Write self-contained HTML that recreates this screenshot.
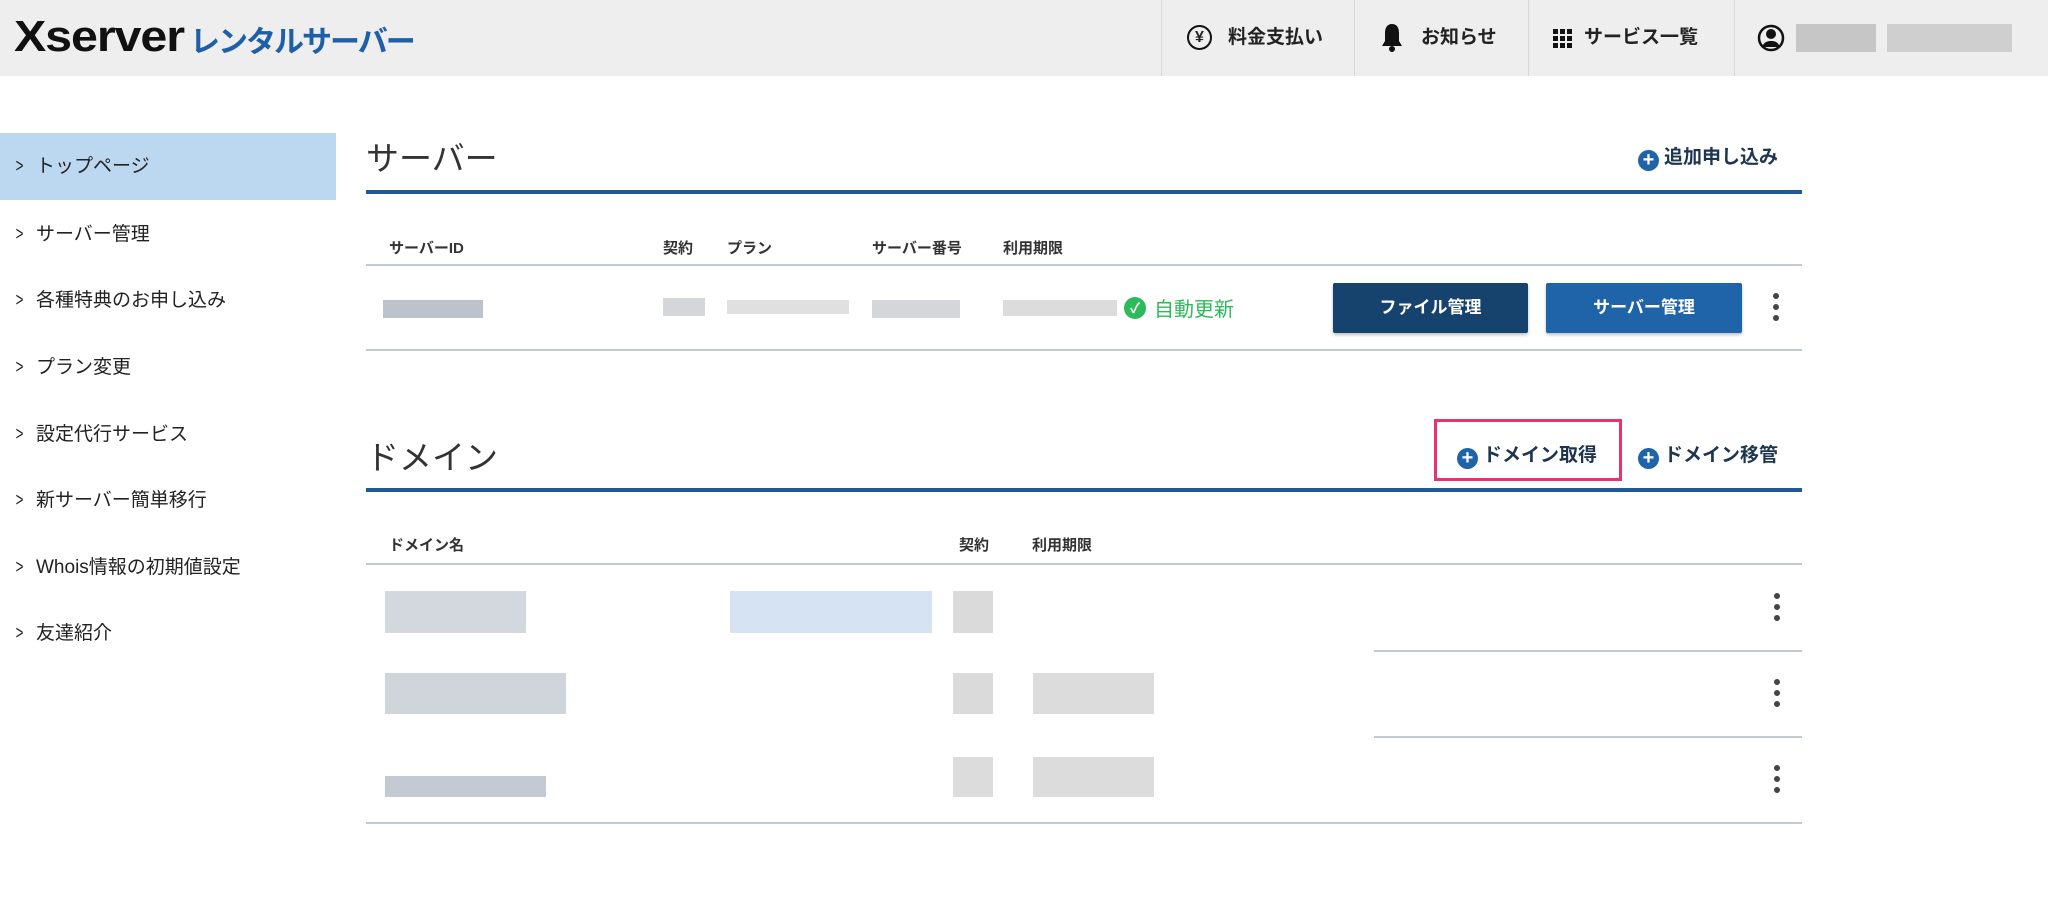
<!DOCTYPE html>
<html><head><meta charset="utf-8"><style>
*{margin:0;padding:0;box-sizing:border-box}
body{width:2048px;height:897px;background:#fff;position:relative;overflow:hidden;font-family:"Liberation Sans","Noto Sans CJK JP",sans-serif;color:#222}
.a{position:absolute;white-space:nowrap}
.hdr{left:0;top:0;width:2048px;height:76px;background:#eeeeee}
.sep{top:0;width:1px;height:76px;background:#d8d8d8}
.nav{top:22px;font-size:19px;font-weight:bold;color:#222}
.side{left:0;width:336px;height:67px;font-size:19px;color:#222;padding-left:12px;line-height:67px}
.side b{font-weight:normal;display:inline-block;width:24px;transform:scaleX(.7)}
.th{font-size:15px;font-weight:bold;color:#333}
.hl{height:2px;background:#c3cacf}
.bl{height:4px;background:#1f5a96;left:366px;width:1436px}
.blur{background:#d4d6da}
.btn{height:50px;top:283px;color:#fff;font-size:17px;font-weight:bold;text-align:center;line-height:50px;border-radius:2px;box-shadow:0 2px 3px rgba(0,0,0,.25)}
.keb{width:6px}
.keb i{display:block;width:6px;height:6px;border-radius:50%;background:#444;margin-bottom:5px}
.add{font-size:19px;font-weight:bold;color:#1e3550}
.pl{display:inline-block;width:21px;height:21px;border-radius:50%;background:#1f63a8;color:#fff;font-size:20px;line-height:20px;text-align:center;vertical-align:-3px;margin-right:5px}
</style></head><body>
<div class="a hdr"></div>
<div class="a" style="left:14px;top:12px;font-size:44px;font-weight:bold;letter-spacing:-1px;color:#111;transform:scaleX(1.1);transform-origin:0 0">Xserver</div>
<div class="a" style="left:190px;top:17px;font-size:30px;font-weight:bold;color:#1f5fa8;letter-spacing:-2px">レンタルサーバー</div>
<div class="a sep" style="left:1161px"></div><div class="a sep" style="left:1354px"></div><div class="a sep" style="left:1528px"></div><div class="a sep" style="left:1734px"></div>
<div class="a" style="left:1187px;top:25px;width:25px;height:25px;border:2px solid #111;border-radius:50%;font-size:16px;font-weight:bold;text-align:center;line-height:21px">¥</div>
<div class="a nav" style="left:1228px">料金支払い</div>
<svg class="a" style="left:1381px;top:22px" width="22" height="32" viewBox="0 0 22 32"><path d="M11 2c-5 0-7 4-7 9v8l-3 5h20l-3-5v-8c0-5-2-9-7-9z" fill="#111"/><circle cx="11" cy="27" r="3" fill="#111"/></svg>
<div class="a nav" style="left:1421px">お知らせ</div>
<svg class="a" style="left:1553px;top:29px" width="20" height="20"><g fill="#111"><rect x="0" y="0" width="5" height="5"/><rect x="7" y="0" width="5" height="5"/><rect x="14" y="0" width="5" height="5"/><rect x="0" y="7" width="5" height="5"/><rect x="7" y="7" width="5" height="5"/><rect x="14" y="7" width="5" height="5"/><rect x="0" y="14" width="5" height="5"/><rect x="7" y="14" width="5" height="5"/><rect x="14" y="14" width="5" height="5"/></g></svg>
<div class="a nav" style="left:1584px">サービス一覧</div>
<svg class="a" style="left:1757px;top:23px" width="28" height="30" viewBox="0 0 28 30"><circle cx="14" cy="15" r="12" fill="none" stroke="#111" stroke-width="2.5"/><circle cx="14" cy="11" r="5" fill="#111"/><path d="M5 24c2-5 5-6 9-6s7 1 9 6" fill="#111"/></svg>
<div class="a" style="left:1796px;top:24px;width:80px;height:28px;background:#c6c6c6"></div>
<div class="a" style="left:1887px;top:24px;width:125px;height:28px;background:#cfcfcf"></div>

<div class="a side" style="top:133px;background:#bcd7f0"><b>&gt;</b>トップページ</div>
<div class="a side" style="top:201px"><b>&gt;</b>サーバー管理</div>
<div class="a side" style="top:267px"><b>&gt;</b>各種特典のお申し込み</div>
<div class="a side" style="top:334px"><b>&gt;</b>プラン変更</div>
<div class="a side" style="top:401px"><b>&gt;</b>設定代行サービス</div>
<div class="a side" style="top:467px"><b>&gt;</b>新サーバー簡単移行</div>
<div class="a side" style="top:534px"><b>&gt;</b>Whois情報の初期値設定</div>
<div class="a side" style="top:600px"><b>&gt;</b>友達紹介</div>

<div class="a" style="left:366px;top:132px;font-size:33px;color:#333">サーバー</div>
<div class="a add" style="left:1638px;top:142px"><span class="pl">+</span>追加申し込み</div>
<div class="a bl" style="top:190px"></div>
<div class="a th" style="left:389px;top:237px">サーバーID</div>
<div class="a th" style="left:663px;top:237px">契約</div>
<div class="a th" style="left:727px;top:237px">プラン</div>
<div class="a th" style="left:872px;top:237px">サーバー番号</div>
<div class="a th" style="left:1003px;top:237px">利用期限</div>
<div class="a hl" style="left:366px;width:1436px;top:264px"></div>
<div class="a blur" style="left:383px;top:300px;width:100px;height:18px;background:#bcc3cc"></div>
<div class="a blur" style="left:663px;top:298px;width:42px;height:18px"></div>
<div class="a blur" style="left:727px;top:300px;width:122px;height:14px;background:#e0e0e0"></div>
<div class="a blur" style="left:872px;top:300px;width:88px;height:18px"></div>
<div class="a blur" style="left:1003px;top:300px;width:114px;height:16px;background:#dcdcdc"></div>
<div class="a" style="left:1124px;top:297px;width:22px;height:22px;border-radius:50%;background:#2dba5a;color:#fff;font-size:14px;font-weight:bold;text-align:center;line-height:22px">✓</div>
<div class="a" style="left:1154px;top:293px;font-size:20px;color:#2dba5a">自動更新</div>
<div class="a btn" style="left:1333px;width:195px;background:#16426e">ファイル管理</div>
<div class="a btn" style="left:1546px;width:196px;background:#1f63a8">サーバー管理</div>
<div class="a keb" style="left:1773px;top:293px"><i></i><i></i><i></i></div>
<div class="a hl" style="left:366px;width:1436px;top:349px"></div>

<div class="a" style="left:366px;top:431px;font-size:33px;color:#333">ドメイン</div>
<div class="a" style="left:1434px;top:419px;width:188px;height:62px;border:3px solid #e8336e"></div>
<div class="a add" style="left:1457px;top:440px"><span class="pl">+</span>ドメイン取得</div>
<div class="a add" style="left:1638px;top:440px"><span class="pl">+</span>ドメイン移管</div>
<div class="a bl" style="top:488px"></div>
<div class="a th" style="left:389px;top:534px">ドメイン名</div>
<div class="a th" style="left:959px;top:534px">契約</div>
<div class="a th" style="left:1032px;top:534px">利用期限</div>
<div class="a hl" style="left:366px;width:1436px;top:563px"></div>

<div class="a" style="left:385px;top:591px;width:141px;height:42px;background:#d3d7de"></div>
<div class="a" style="left:730px;top:591px;width:202px;height:42px;background:#d6e3f2"></div>
<div class="a" style="left:953px;top:591px;width:40px;height:42px;background:#dadada"></div>
<div class="a keb" style="left:1774px;top:593px"><i></i><i></i><i></i></div>
<div class="a hl" style="left:1374px;width:428px;top:650px"></div>
<div class="a" style="left:385px;top:673px;width:181px;height:41px;background:#d0d4db"></div>
<div class="a" style="left:953px;top:673px;width:40px;height:41px;background:#dadada"></div>
<div class="a" style="left:1033px;top:673px;width:121px;height:41px;background:#dcdcdc"></div>
<div class="a keb" style="left:1774px;top:679px"><i></i><i></i><i></i></div>
<div class="a hl" style="left:1374px;width:428px;top:736px"></div>
<div class="a" style="left:385px;top:776px;width:161px;height:21px;background:#c4cad3"></div>
<div class="a" style="left:953px;top:757px;width:40px;height:40px;background:#dcdcdc"></div>
<div class="a" style="left:1033px;top:757px;width:121px;height:40px;background:#dcdcdc"></div>
<div class="a keb" style="left:1774px;top:765px"><i></i><i></i><i></i></div>
<div class="a hl" style="left:366px;width:1436px;top:822px"></div>
</body></html>
